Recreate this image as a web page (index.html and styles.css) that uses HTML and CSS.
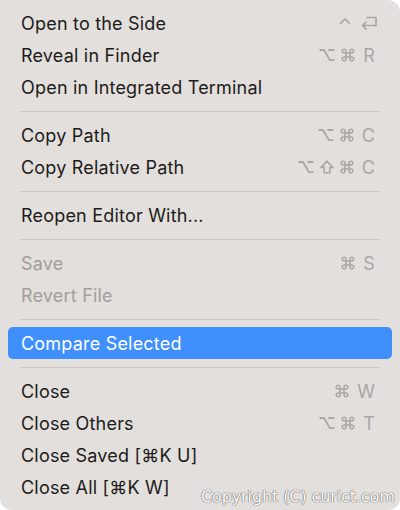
FILE: index.html
```html
<!DOCTYPE html>
<html>
<head>
<meta charset="utf-8">
<link rel="stylesheet" href="styles.css">
</head>
<body>
<svg width="0" height="0" class="defs">
  <defs>
    <symbol id="opt" viewBox="0 0 16 14"><path d="M0.5 2 H5 L11 12.2 H15.5 M9.3 2 H15.5" fill="none" stroke="currentColor" stroke-width="1.8"/></symbol>
    <symbol id="cmd" viewBox="0 0 14 14"><path d="M5 5 V3.2 A1.9 1.9 0 1 0 3.1 5 H10.9 A1.9 1.9 0 1 0 9 3.2 V10.8 A1.9 1.9 0 1 0 10.9 9 H3.1 A1.9 1.9 0 1 0 5 10.8 Z" fill="none" stroke="currentColor" stroke-width="1.6"/></symbol>
    <symbol id="shift" viewBox="0 0 14 14"><path d="M7 1.2 L13 7.4 H9.8 V12.8 H4.2 V7.4 H1 Z" fill="none" stroke="currentColor" stroke-width="1.6" stroke-linejoin="round"/></symbol>
    <symbol id="ctrl" viewBox="0 0 14 14"><path d="M2 8 L7 3 L12 8" fill="none" stroke="currentColor" stroke-width="1.7"/></symbol>
    <symbol id="ret" viewBox="0 0 18 14"><path d="M6 1.5 H16 V9.5 H2.5 M6.5 5.5 L2.5 9.5 L6.5 13.5" fill="none" stroke="currentColor" stroke-width="1.7" stroke-linejoin="round"/></symbol>
  </defs>
</svg>
<div class="menu">
  <div class="item"><span class="label">Open to the Side</span><span class="keys"><svg class="ic"><use href="#ctrl"/></svg><svg class="ic ret"><use href="#ret"/></svg></span></div>
  <div class="item"><span class="label">Reveal in Finder</span><span class="keys"><svg class="ic opt"><use href="#opt"/></svg><svg class="ic"><use href="#cmd"/></svg><span class="k">R</span></span></div>
  <div class="item"><span class="label">Open in Integrated Terminal</span></div>
  <div class="sep"></div>
  <div class="item"><span class="label">Copy Path</span><span class="keys"><svg class="ic opt"><use href="#opt"/></svg><svg class="ic"><use href="#cmd"/></svg><span class="k">C</span></span></div>
  <div class="item"><span class="label">Copy Relative Path</span><span class="keys"><svg class="ic opt"><use href="#opt"/></svg><svg class="ic"><use href="#shift"/></svg><svg class="ic"><use href="#cmd"/></svg><span class="k">C</span></span></div>
  <div class="sep"></div>
  <div class="item"><span class="label">Reopen Editor With...</span></div>
  <div class="sep"></div>
  <div class="item disabled"><span class="label">Save</span><span class="keys"><svg class="ic"><use href="#cmd"/></svg><span class="k">S</span></span></div>
  <div class="item disabled"><span class="label">Revert File</span></div>
  <div class="sep"></div>
  <div class="item active"><span class="label">Compare Selected</span></div>
  <div class="sep"></div>
  <div class="item"><span class="label">Close</span><span class="keys"><svg class="ic"><use href="#cmd"/></svg><span class="k">W</span></span></div>
  <div class="item"><span class="label">Close Others</span><span class="keys"><svg class="ic opt"><use href="#opt"/></svg><svg class="ic"><use href="#cmd"/></svg><span class="k">T</span></span></div>
  <div class="item"><span class="label">Close Saved [⌘K U]</span></div>
  <div class="item"><span class="label">Close All [⌘K W]</span></div>
  <div class="watermark">Copyright (C) curict.com</div>
</div>
</body>
</html>
```
FILE: styles.css
```css
html, body {
  margin: 0;
  padding: 0;
  background: #ffffff;
}
.defs {
  position: absolute;
  width: 0;
  height: 0;
}
.menu {
  position: relative;
  width: 400px;
  height: 510px;
  box-sizing: border-box;
  background: #e3dfdc;
  border-radius: 0 12px 12px 12px;
  padding: 7px 8px 0 8px;
  display: flex;
  flex-direction: column;
  font-family: Inter, "Noto Sans", sans-serif;
  font-size: 18px;
  letter-spacing: 0.2px;
  color: #1d1c1b;
  overflow: hidden;
}
.item {
  height: 32px;
  display: flex;
  align-items: center;
  justify-content: space-between;
  padding: 0 17px 0 13px;
  border-radius: 5px;
  flex: none;
}
.item.disabled {
  color: #a29e9b;
}
.item.active {
  background: #3f8ffc;
  color: #ffffff;
}
.sep {
  height: 16px;
  flex: none;
  display: flex;
  align-items: center;
  padding: 0 13px;
}
.sep::before {
  content: "";
  display: block;
  width: 100%;
  height: 1px;
  background: #cbc7c4;
}
.keys {
  display: flex;
  align-items: center;
  gap: 6px;
  color: #aaa6a3;
  font-size: 18px;
  letter-spacing: 0;
}
.ic {
  width: 14px;
  height: 14px;
  display: block;
}
.ic.opt {
  width: 16px;
}
.ic.ret {
  width: 18px;
  margin-left: 2px;
  margin-right: -3px;
}
.k {
  display: inline-flex;
  align-items: center;
  justify-content: center;
  min-width: 12px;
  margin-left: 2px;
}
.watermark {
  position: absolute;
  left: 201px;
  top: 487px;
  font-family: "DejaVu Sans", Verdana, sans-serif;
  font-size: 15.8px;
  letter-spacing: 0;
  color: #ffffff;
  text-shadow: 0 0 1px #6d6a68, 0 0 1px #6d6a68, 0 0 1px #6d6a68;
}
```
